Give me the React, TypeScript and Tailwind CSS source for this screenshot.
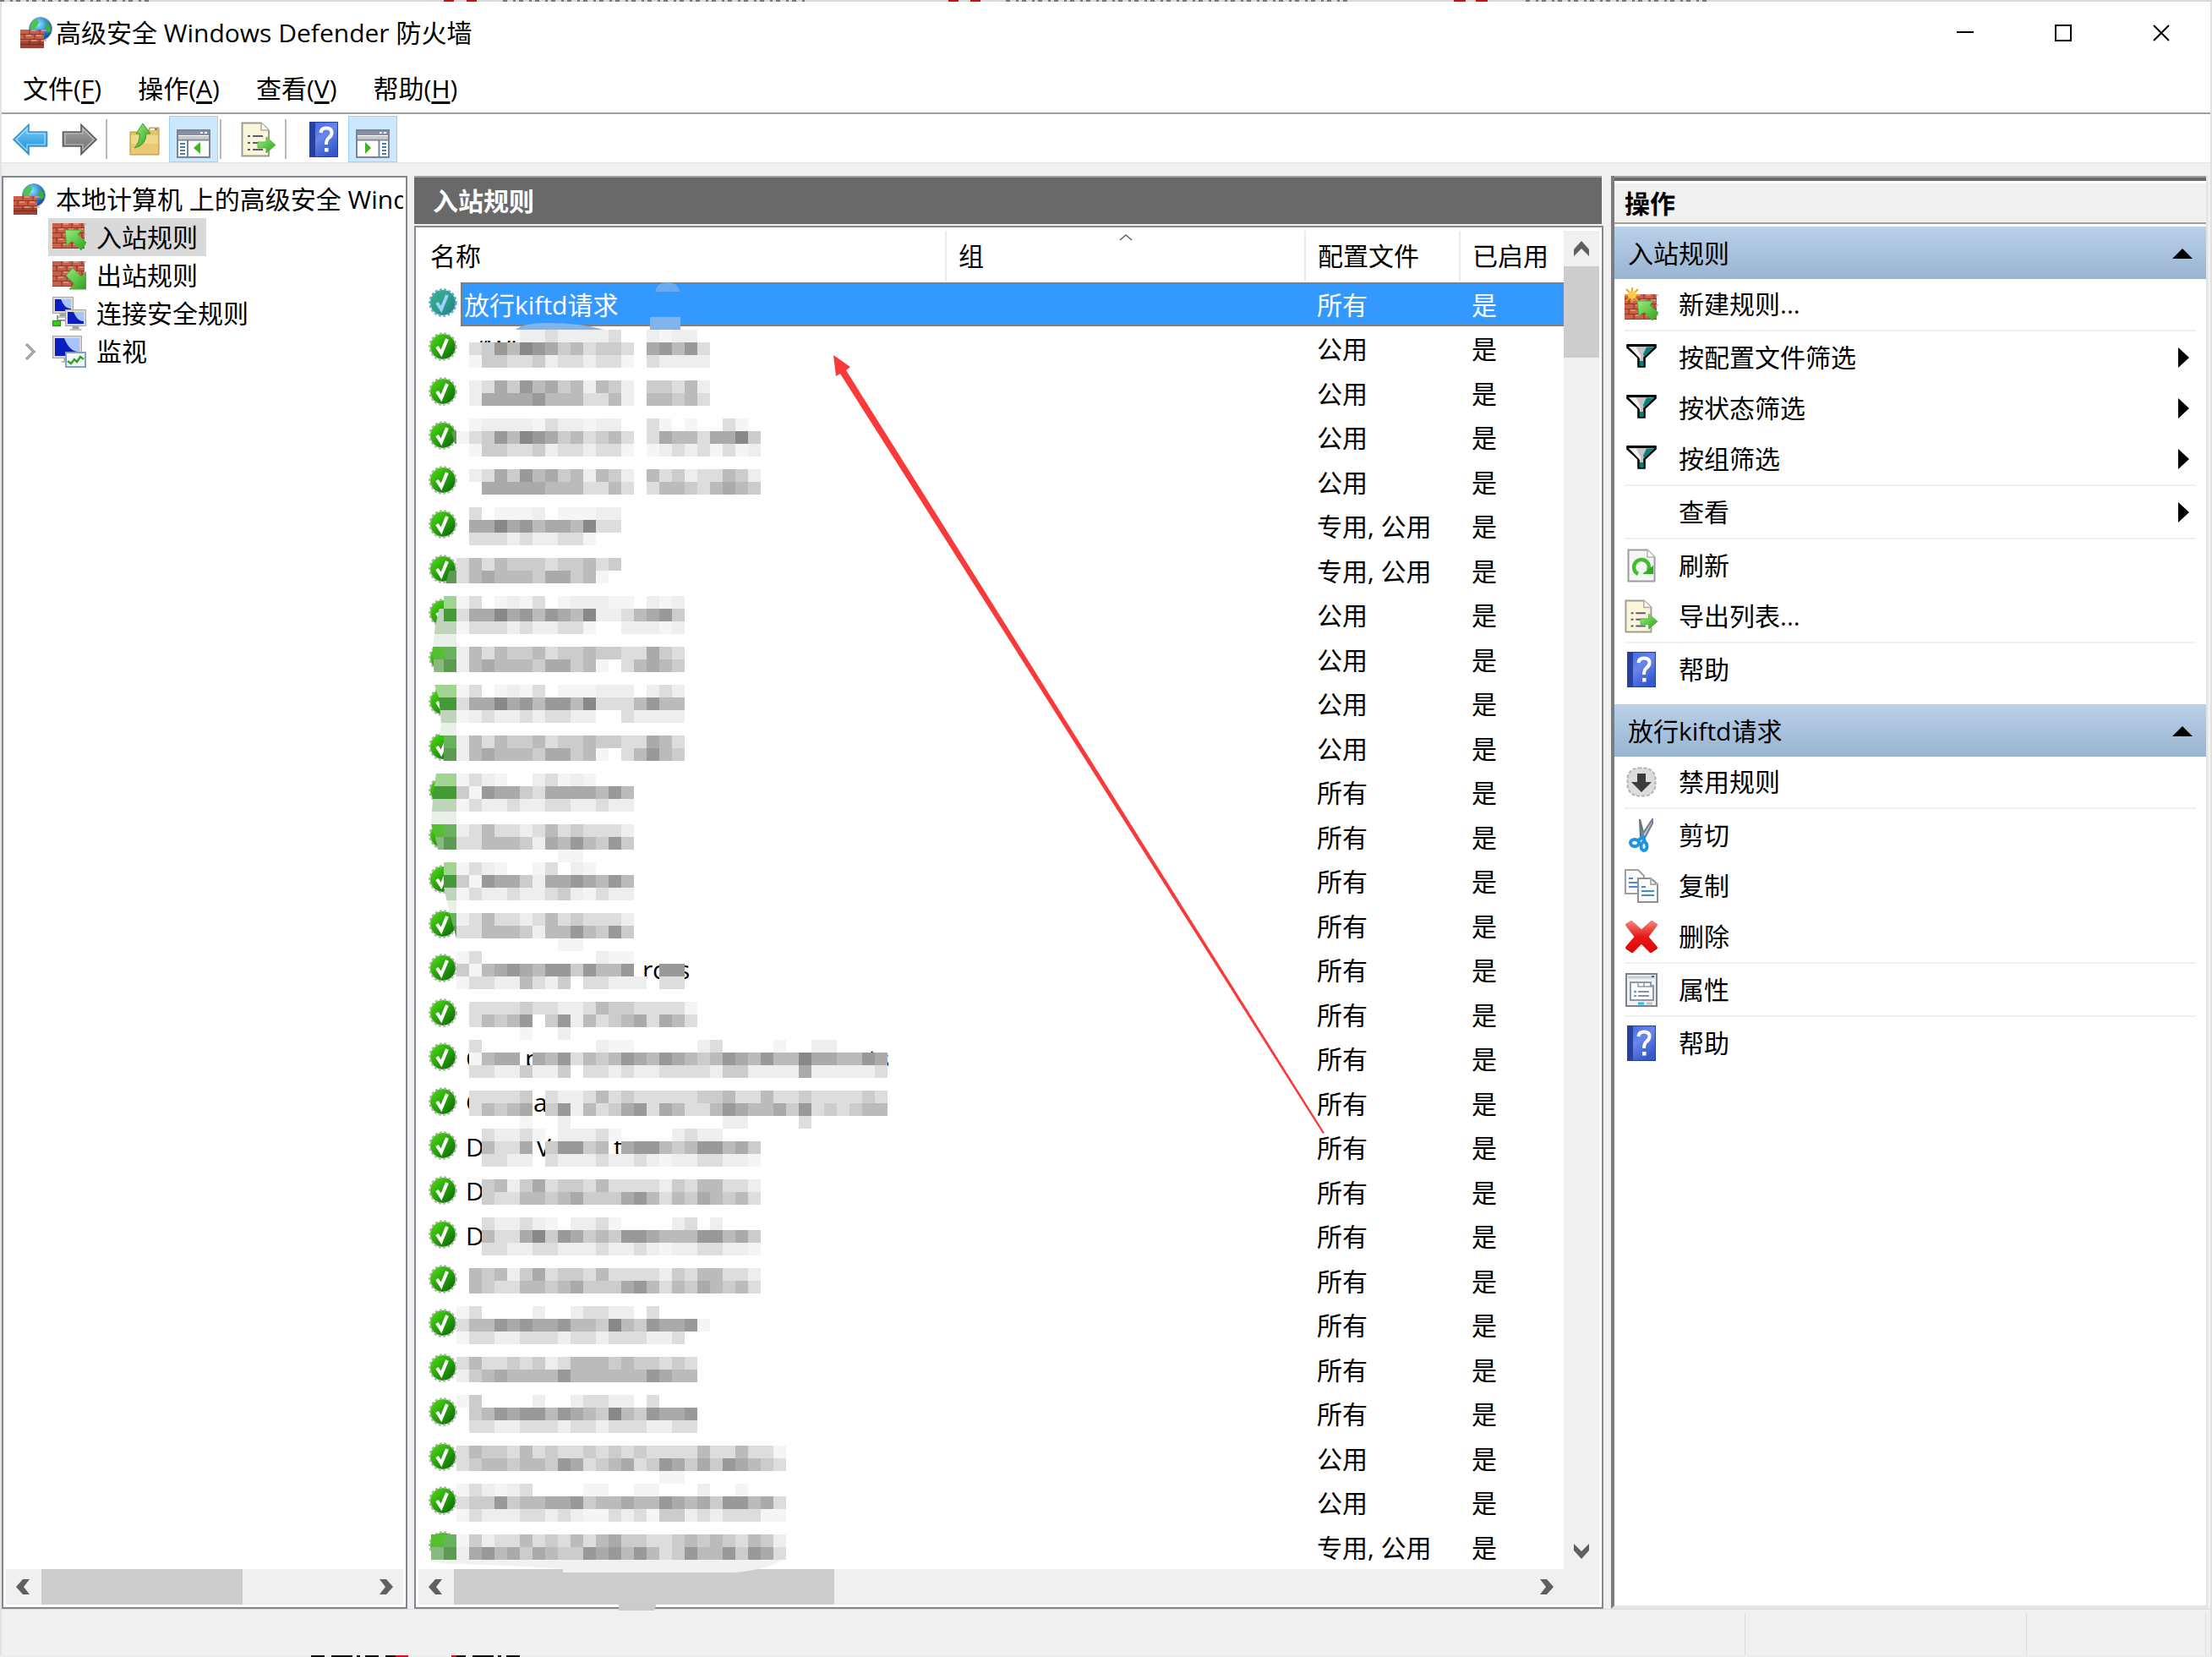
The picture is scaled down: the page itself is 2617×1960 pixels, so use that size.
import { useState } from 'react'
import type { ReactNode } from 'react'

const rules = [
  '所有', '公用', '公用', '公用', '公用', '专用, 公用', '专用, 公用', '公用', '公用', '公用',
  '公用', '所有', '所有', '所有', '所有', '所有', '所有', '所有', '所有', '所有',
  '所有', '所有', '所有', '所有', '所有', '所有', '公用', '公用', '专用, 公用',
]

// one string per 15px strip, first cell sits at x=510; hex digit = grey level, p-w = green tints
const mosaic: [number, string][] = [
  [390, '.......eedeeeed..efee'],
  [405, '...dc9b89acbdccd.a9b9d'],
  [420, '...fccddceddeddf.deeee'],
  [450, '...edac9bacbebce.ccdbe'],
  [465, '...eaaaa9bbbddbe.bbcbd'],
  [495, '...feeeefdeefee..df.f..df'],
  [510, '.sfdc9b89acbdcbd.dabbdaa8c'],
  [525, '...fccddceddeddf.fededfdfe'],
  [555, '...edac9bacbebce.bdceddbce'],
  [570, '....aaaaabbbddbd.dbbcdbabc'],
  [600, '...d.fffe.fffee'],
  [615, '...aa8a9baab8dd'],
  [630, '...dddedeeddf'],
  [660, '..dbdbcccdccbdc'],
  [675, '.sdbabbbcaacbf'],
  [705, '.tfd.fefd.feeeff.efe'],
  [720, 'vudaa8a9b9ab8eedba9c'],
  [735, 'vvfdddedeeddf..eeefe'],
  [750, 'ww'],
  [765, 'pqebdbccbdccbccddacd'],
  [780, 'rsebabbbcaacbf.dbabc'],
  [810, 'ttfd.fefd.fffeee.ede'],
  [825, 'uudaa8a9b99b8dddb9bb'],
  [840, 'vvfedeededdee..deeee'],
  [855, 'ww'],
  [870, '.qebdbccbdccbccddabd'],
  [885, '.sebabbbcaacbf.db9bc'],
  [915, 'ttfdef..edfef'],
  [930, 'uucf9aacdaaaab9b'],
  [945, 'vvfdeedeeddeedee'],
  [960, 'ww'],
  [975, 'pqedbddedbdcddde'],
  [990, 'rsddbbbceab9bc9c'],
  [1005, '..........ff'],
  [1020, '.tfdef..fd.ef'],
  [1035, '.ucf9aaceaa9ab9b'],
  [1050, '.vfdeedeedcefdee'],
  [1065, '.w'],
  [1080, '.qedbddedbdcddde'],
  [1095, '.sddbbbcebb9bc9c'],
  [1110, '..........ff'],
  [1125, '..fd.........eff'],
  [1140, '..cfba9ab99c9bb9..99'],
  [1155, '..fddeebdec.ddeee.dd'],
  [1185, '...ddddcddeedbccddddf'],
  [1200, '...dbcb9.c9ebdcbadabd'],
  [1215, '.......f..e'],
  [1230, '...d.........eff.....ed....f..ee'],
  [1245, '...fbaa.ab9dbcb9ab9abcb9ab9bb8aabb9a'],
  [1260, '...ddeeceec.ddedeeddddecceeeeaeeeeed'],
  [1290, '...ddddc.deedbdcdddddccbddbddcddddcd'],
  [1305, '...dbcba.c9ebdca9dabddb9abbac9dcdcbb'],
  [1320, '.......f..e............ee....d'],
  [1335, '....deedf.eeedf....edee'],
  [1350, '....bdda.c99cb.a99bcb99bac'],
  [1365, '....ddee.deeedeedefeeddeef'],
  [1395, '....cbecadccdbddddecdbbdde'],
  [1410, '....cddbbcbacccA9bdbcabcbd'],
  [1440, '....deedef.eedf....ed.e'],
  [1455, '....bdda8c9acbc99abbb99bac'],
  [1470, '....ddeeddeeedeedefeeddeef'],
  [1500, '...bcbecadccdbddddecdbbdde'],
  [1515, '...bcddbbcbacccA9bdbcabcbd'],
  [1545, '..fd....e..eddee.d'],
  [1560, '..dbb9a9aa9bbc8bc9aa9f'],
  [1575, '..fddeedddeddedddeed'],
  [1605, '..dbddcdcedbbbcbccdcd'],
  [1620, '..ecbabbbb9bbbbbb9abb'],
  [1650, '..fc....e..eddee.d'],
  [1665, '...cb9a99b9abc8bc9aa9'],
  [1680, '...ddeedddeddedddeedd'],
  [1710, '..dbccdbdcddcdcdcddddbddbddf'],
  [1725, '..dcbbcbbc9adcbadc9acac9abcd'],
  [1740, '..................ff'],
  [1755, '..fdefed....ff..ff...e..f'],
  [1770, '..dcc9cbbaa9cbbabb9abac99bad'],
  [1785, '..fdeeeddedeffdedfccededddff'],
  [1815, 'pqfceddbdcdbdbaccddcbcbcdbce'],
  [1830, 'rsea9bacabcc9a9b9bdc9bb9c9ad'],
]

const tints: Record<string, string> = {
  p: '#54c030', q: '#69b25d', r: '#88ba80', s: '#5e9a54',
  t: '#a0d490', u: '#459a38', v: '#c0d4bc', w: '#e9f0e7',
}

// bits of the names that stay readable between the mosaic cells
const fragments: [number, number, string][] = [
  [566, 413, '“Wi'],
  [760, 1147, 'r'],
  [772, 1147, 'c'],
  [802, 1147, 's'],
  [769, 1200, 'C'],
  [551, 1252, 'C'],
  [621, 1252, 'pa'],
  [992, 1252, 'ents'],
  [551, 1304, 'C'],
  [631, 1304, 'a'],
  [551, 1357, 'D'],
  [634, 1357, 'V'],
  [726, 1357, 't'],
  [551, 1409, 'D'],
  [551, 1462, 'D'],
  [818, 1830, 'F'],
]

function Mosaic() {
  return (
    <svg
      className="pointer-events-none absolute left-0 top-0 h-[1640px] w-[1404px]"
      viewBox="492 269 1404 1640"
      fill="none"
    >
      <defs>
        <clipPath id="smear">
          <path d="M2000 300 V1900 H505 V1160 L540 1110 L532 1080 L525 1050 L521 1020 L515 990 L510 975 L512 945 L516 915 L520 870 L522 855 L519 825 L514 810 L512 765 L515 740 L522 710 L530 680 L540 650 V540 L538 525 L534 510 L540 490 V300z" />
        </clipPath>
      </defs>
      <path d="M775 345 q2 -11 15 -11 q12 0 14 11z" fill="#6aaaf0" />
      <rect x="769" y="375" width="36" height="15" fill="#80b4ea" />
      <path d="M610 390 q8 -8 38 -8 q40 0 66 8z" fill="#80b4ea" />
      {fragments.map(([x, y, text]) => (
        <text key={`${x}-${y}`} x={x} y={y + 11} fontSize="30" fill="#000">{text}</text>
      ))}
      <g clipPath="url(#smear)">
        {mosaic.map(([y, cells]) =>
          cells.split('').map((c, i) => {
            if (c === '.') return null
            const fill = tints[c] || (c === 'f' ? '#f5f5f5' : `#${c.repeat(6)}`)
            return <rect key={`${y}-${i}`} x={510 + i * 15} y={y} width="15" height="15" fill={fill} />
          })
        )}
      </g>
      <path d="M508 1845 H925 Q910 1856 870 1860 H666 V1856 Q600 1851 540 1850 Q515 1850 508 1845z" fill="#f1f1f1" />
      <path d="M732 1896 H776 V1900 L774 1905 H732z" fill="#c9cbcd" />
      <path d="M986 420 L1006 434 L1001 438 L1567 1340 L1565 1341 L994 442 L989 445z" fill="#fa3a3a" />
    </svg>
  )
}

function Bricks({ x = 0, y = 0, w = 38, h = 30 }) {
  const rows = Math.floor(h / 6)
  const lines = []
  for (let r = 0; r < rows; r++) {
    lines.push(<path key={`h${r}`} d={`M${x} ${y + r * 6 + 5.5}h${w}`} stroke="#8c3c2c" strokeWidth="1.2" />)
    for (let c = r % 2 ? 5 : 11; c < w; c += 12) {
      lines.push(<path key={`v${r}-${c}`} d={`M${x + c} ${y + r * 6}v5`} stroke="#96402e" strokeWidth="1.4" />)
      lines.push(<path key={`s${r}-${c}`} d={`M${x + c + 2} ${y + r * 6 + 1}h6`} stroke="#e8a08c" strokeWidth="1.4" />)
    }
  }
  return (
    <g>
      <rect x={x} y={y} width={w} height={h} fill="#c8604a" />
      {lines}
    </g>
  )
}

function FirewallIcon() {
  return (
    <svg className="size-[38px] shrink-0" viewBox="0 0 38 38">
      <defs>
        <radialGradient id="globe" cx="0.4" cy="0.3" r="0.8">
          <stop offset="0" stopColor="#8fe4ff" />
          <stop offset="0.5" stopColor="#2f86dc" />
          <stop offset="1" stopColor="#10367e" />
        </radialGradient>
      </defs>
      <circle cx="24" cy="14" r="13.5" fill="url(#globe)" stroke="#7a9ab0" />
      <path d="M12 13 Q12 4 20 3 Q24 6 20 10 Q18 15 12 15z" fill="#48c848" />
      <path d="M29 5 Q36 9 36 16 Q34 20 31 18 Q28 12 31 10z" fill="#3fae3c" />
      <Bricks x={0} y={15} w={28} h={22} />
      <path d="M0 29h28v8H0z" fill="#5c1008" opacity="0.35" />
    </svg>
  )
}

function GreenDefs({ id }: { id: string }) {
  return (
    <defs>
      <linearGradient id={id} x1="0" y1="0" x2="1" y2="1">
        <stop offset="0" stopColor="#9af07c" />
        <stop offset="1" stopColor="#2f9c1e" />
      </linearGradient>
    </defs>
  )
}

function InboundIcon() {
  return (
    <svg className="h-[34px] w-10 shrink-0" viewBox="0 0 40 34">
      <GreenDefs id="gin" />
      <Bricks />
      <path d="M15 8 H35 L30 13 L40 23 L34 32 L23 21 L17 27 z" fill="url(#gin)" stroke="#4aa838" strokeWidth="1" />
    </svg>
  )
}

function OutboundIcon() {
  return (
    <svg className="h-[34px] w-10 shrink-0" viewBox="0 0 40 34">
      <GreenDefs id="gout" />
      <Bricks />
      <path d="M24 8 L34 18 L40 13 V33 H20 L26 27 L16 17 z" fill="url(#gout)" stroke="#4aa838" strokeWidth="1" />
    </svg>
  )
}

function Monitor({ x, y, w, h }: { x: number; y: number; w: number; h: number }) {
  return (
    <g>
      <rect x={x + w / 2 - 4} y={y + h} width="8" height="3" fill="#a4a4a0" />
      <rect x={x + w / 2 - 7} y={y + h + 3} width="14" height="2" fill="#c2c2be" />
      <rect x={x + 0.5} y={y + 0.5} width={w - 1} height={h - 1} fill="#dad8d0" stroke="#a8a8a4" />
      <rect x={x + 3} y={y + 3} width={w - 6} height={h - 6} fill="#0a1ec0" />
      <path d={`M${x + w * 0.4} ${y + 3} H${x + w - 3} V${y + h * 0.7} Q${x + w * 0.6} ${y + h * 0.75} ${x + w * 0.4} ${y + 3}z`} fill="#a8c4ff" />
    </g>
  )
}

function ConnectionIcon() {
  return (
    <svg className="size-10 shrink-0" viewBox="0 0 40 40">
      <Monitor x={0} y={0} w={25} h={20} />
      <path d="M6 22 V28 H18" stroke="#999" strokeWidth="2" fill="none" />
      <rect x="0.5" y="28.5" width="9" height="6" fill="#2fcf10" stroke="#2a8a18" />
      <Monitor x={15} y={15} w={25} h={20} />
    </svg>
  )
}

function MonitoringIcon() {
  return (
    <svg className="size-10 shrink-0" viewBox="0 0 40 40">
      <Monitor x={0} y={1} w={35} h={27} />
      <rect x="16" y="21" width="23" height="17" fill="#f4f8ff" stroke="#7fa2cc" strokeWidth="2" />
      <path d="M18 31 L22 34 L26 29 L29 32 L33 26 L37 29" stroke="#38a020" strokeWidth="2.4" fill="none" />
    </svg>
  )
}

function CheckIcon({ selected = false }) {
  const id = selected ? 'chk-sel' : 'chk'
  return (
    <svg className="mb-1 size-[34px] shrink-0" viewBox="0 0 34 34">
      <defs>
        <linearGradient id={id} x1="0" y1="0" x2="1" y2="1">
          <stop offset="0.15" stopColor={selected ? '#3aae8c' : '#44d010'} />
          <stop offset="0.9" stopColor={selected ? '#238888' : '#0c6e06'} />
        </linearGradient>
      </defs>
      <circle cx="17" cy="17" r="15" fill={`url(#${id})`} />
      <circle cx="17" cy="17" r="15.6" fill="none" stroke={selected ? '#6aa6dc' : '#a8b4a4'} strokeWidth="2.4" strokeDasharray="3 2.3" />
      <path d="M10 17 L15 25 L22 8" fill="none" stroke={selected ? '#9ad0fa' : '#fff'} strokeWidth="4" />
    </svg>
  )
}

function BackIcon({ forward = false }) {
  const id = forward ? 'fwd' : 'back'
  return (
    <svg className="h-[38px] w-[42px]" viewBox="0 0 42 38">
      <defs>
        <linearGradient id={id} x1="0" y1="0" x2="0" y2="1">
          <stop offset="0" stopColor={forward ? '#a4a4a4' : '#7cd2fa'} />
          <stop offset="1" stopColor={forward ? '#6e6e6e' : '#1488d8'} />
        </linearGradient>
      </defs>
      <path
        d={forward ? 'M41 19 L23 1.5 V10 H1.5 V27 H23 V36.5z' : 'M1 19 L19 1.5 V10 H40.5 V27 H19 V36.5z'}
        fill={`url(#${id})`}
        stroke={forward ? '#5a5a5a' : '#3f8fc4'}
        strokeWidth="1.6"
      />
      <path
        d={forward ? 'M38 19 L25 6 V12 H4 V25 H25 V32z' : 'M4 19 L17 6 V12 H38 V25 H17 V32z'}
        fill="none"
        stroke={forward ? '#c0c0c0' : '#a4e0ff'}
        strokeWidth="1.2"
      />
    </svg>
  )
}

function FolderIcon() {
  return (
    <svg className="h-[38px] w-9" viewBox="0 0 36 38">
      <GreenDefs id="gfold" />
      <path d="M1 10 H22 L24 5 H35 V37 H1z" fill="#e8c468" stroke="#b8903c" />
      <path d="M25 7 h5" stroke="#fff" strokeWidth="2" />
      <path d="M30 7 h3" stroke="#3f90d8" strokeWidth="2" />
      <path d="M2 14 H34 V36 H2z" fill="#f3d88c" />
      <path d="M2 24 H34 V36 H2z" fill="#e6c060" opacity="0.6" />
      <path d="M16 0 L25 12 H20 Q20 26 6 29 Q13 22 12 12 H8z" fill="url(#gfold)" stroke="#3f9c2a" />
    </svg>
  )
}

function PaneIcon({ flip = false }) {
  return (
    <svg className="h-[34px] w-10" viewBox="0 0 40 34">
      <rect x="1" y="1" width="38" height="32" fill="#fff" stroke="#7b8494" strokeWidth="2" />
      <rect x="2" y="2" width="36" height="5" fill="#8891a1" />
      <path d="M28 4h3M33 4h3" stroke="#e8f0fa" strokeWidth="2" />
      <rect x="2" y="8" width="36" height="3" fill="#c4cad4" />
      <path d="M1 12.5H39" stroke="#7b8494" strokeWidth="2" />
      <path d={flip ? 'M27.5 13V33' : 'M13 13V33'} stroke="#7b8494" strokeWidth="2" />
      <path d={flip ? 'M31 17h5M31 21h5M31 25h5M31 29h5' : 'M4 17h6M4 21h6M4 25h6M4 29h6'} stroke="#3c80c0" strokeWidth="1.8" />
      <path d={flip ? 'M11 15 L18 22 L11 29z' : 'M28 15 L20 22 L28 29z'} fill="#44b024" />
    </svg>
  )
}

function ExportIcon() {
  return (
    <svg className="h-[42px] w-[42px]" viewBox="0 0 42 42">
      <GreenDefs id="gexp" />
      <path d="M1.5 1.5 H24 L33 10 V40.5 H1.5z" fill="#fbf5da" stroke="#a09c90" strokeWidth="2" />
      <path d="M24 1.5 V10 H33" fill="#fff" stroke="#b0aca0" strokeWidth="1.6" />
      <path d="M8 17h3M8 25h3M8 33h3M14 17h12M14 25h10M14 33h12" stroke="#5a5a70" strokeWidth="2" />
      <path d="M20 24 H30 V18 L41 27.5 L30 37 V31 H20z" fill="url(#gexp)" stroke="#58b848" />
    </svg>
  )
}

function HelpIcon() {
  return (
    <svg className="h-[42px] w-[34px]" viewBox="0 0 34 42">
      <defs>
        <linearGradient id="book" x1="0" y1="0" x2="0.6" y2="1">
          <stop offset="0" stopColor="#3f66e0" />
          <stop offset="0.5" stopColor="#6a86ea" />
          <stop offset="1" stopColor="#3558cc" />
        </linearGradient>
      </defs>
      <rect x="0.5" y="0.5" width="33" height="41" fill="url(#book)" stroke="#24409c" />
      <rect x="1" y="1" width="6" height="40" fill="#2840a0" />
      <path d="M13.5 13 Q14 7.500 20 7.500 Q26.500 7.500 26.500 13 Q26.500 16.500 23 19 Q20 21.500 20 27" fill="none" stroke="#fff" strokeWidth="4" />
      <rect x="18" y="31" width="4.500" height="4.500" fill="#fff" />
    </svg>
  )
}

function NewRuleIcon() {
  return (
    <svg className="size-10" viewBox="0 0 40 40">
      <GreenDefs id="gnew" />
      <Bricks y={8} />
      <path d="M15 16 H34 L30 21 L40 30 L33 39 L23 29 L17 34 z" fill="url(#gnew)" stroke="#4aa838" />
      <path d="M9 0V18M0 9H18M2 2L16 16M16 2L2 16" stroke="#f0a020" strokeWidth="1.8" />
      <circle cx="9" cy="9" r="5" fill="#ffc848" />
    </svg>
  )
}

function FilterIcon() {
  return (
    <svg className="mb-1 h-7 w-9" viewBox="0 0 36 28">
      <path d="M1.5 1.5 H34.5 V4 L21.5 16 V26.5 H14.5 V16 L1.5 4z" fill="#c4c4c4" stroke="#000" strokeWidth="2.6" />
      <path d="M4 3.5 H12 L17 14 V18 L4 4z" fill="#f2f2f2" />
      <path d="M24 3.5 H33 L21 15 L20 12z" fill="#008080" />
      <rect x="16" y="20" width="4.5" height="6" fill="#008080" />
      <path d="M1 1.5 H35" stroke="#000" strokeWidth="2.8" />
    </svg>
  )
}

function RefreshIcon() {
  return (
    <svg className="h-10 w-[34px]" viewBox="0 0 34 40">
      <path d="M1.5 1.5 H24 L32.5 10 V38.5 H1.5z" fill="#f4f6f6" stroke="#9c9c9c" strokeWidth="2" />
      <path d="M24 1.5 V10 H32.5" fill="#fff" stroke="#b4b4b4" strokeWidth="1.5" />
      <path d="M13 30 A9 9 0 1 1 25 26" fill="none" stroke="#44bc34" strokeWidth="4.5" />
      <path d="M18 30 H31 V20z" fill="#2cb01c" />
    </svg>
  )
}

function DisableIcon() {
  return (
    <svg className="size-9" viewBox="0 0 36 36">
      <rect x="1.5" y="1.5" width="33" height="33" rx="13" fill="#dcdcdc" stroke="#b4b4b4" strokeWidth="2" strokeDasharray="4 2" />
      <path d="M13 8 H23 V18 H30 L18 30 L6 18 H13z" fill="#3c3c3c" />
    </svg>
  )
}

function CutIcon() {
  return (
    <svg className="h-10 w-8" viewBox="0 0 32 40">
      <path d="M14 1 L15 24 L20 24z" fill="#8494a4" stroke="#607080" strokeWidth="2" />
      <path d="M29 1 L15 22 L19 25 L29 6z" fill="#b4c0cc" stroke="#708090" strokeWidth="2" />
      <ellipse cx="8" cy="29" rx="5" ry="4" fill="none" stroke="#2094e0" strokeWidth="4" />
      <ellipse cx="19" cy="33" rx="3.5" ry="5" fill="none" stroke="#2094e0" strokeWidth="4" />
      <path d="M12 26 L18 22 L20 28" stroke="#2094e0" strokeWidth="4" fill="none" />
    </svg>
  )
}

function CopyIcon() {
  return (
    <svg className="size-10" viewBox="0 0 40 40">
      <path d="M1 1 H16 L23 8 V29 H1z" fill="#fbfbfb" stroke="#a0a0a0" strokeWidth="2" />
      <path d="M5 11h5M5 16h10M5 21h10" stroke="#4a88c8" strokeWidth="2" />
      <path d="M16 11 H31 L39 18 V39 H16z" fill="#fbfbfb" stroke="#909090" strokeWidth="2" />
      <path d="M31 11 V18 H39" fill="none" stroke="#b0b0b0" strokeWidth="2" />
      <path d="M20 21h5M20 26h15M20 31h15" stroke="#4a88c8" strokeWidth="2" />
    </svg>
  )
}

function DeleteIcon() {
  return (
    <svg className="size-10" viewBox="0 0 40 40">
      <defs>
        <linearGradient id="del" x1="0" y1="0" x2="0" y2="1">
          <stop offset="0" stopColor="#f47c74" />
          <stop offset="0.5" stopColor="#e81818" />
          <stop offset="1" stopColor="#e00808" />
        </linearGradient>
      </defs>
      <path
        d="M3 6 L8 3 L20 14 L32 3 L37 6 L26 20 L37 33 L31 37 L20 26 L9 37 L3 33 L14 20z"
        fill="url(#del)"
        stroke="url(#del)"
        strokeWidth="4"
        strokeLinejoin="round"
      />
    </svg>
  )
}

function PropertiesIcon() {
  return (
    <svg className="h-10 w-[38px]" viewBox="0 0 38 40">
      <rect x="1" y="1" width="36" height="38" fill="#eef1f4" stroke="#7c8288" strokeWidth="2" />
      <path d="M3 5H35" stroke="#c4ccd4" strokeWidth="3" />
      <path d="M31 4h3" stroke="#3a6a9a" strokeWidth="2" />
      <path d="M6 11 H30 V15 H33 V32 H6z" fill="#fff" stroke="#9098a8" strokeWidth="2" />
      <path d="M15 11V16H32M22 11V16" stroke="#9098a8" strokeWidth="1.5" fill="none" />
      <path d="M10 22h3" stroke="#20c0f0" strokeWidth="2.5" />
      <path d="M15 22h13M10 27h3M15 27h13" stroke="#8890a0" strokeWidth="2" />
      <path d="M15 36h7" stroke="#20c0f0" strokeWidth="3" />
      <path d="M25 36h7" stroke="#c0c4c8" strokeWidth="3" />
    </svg>
  )
}

function ScrollButton({ dir }: { dir: 'left' | 'right' | 'up' | 'down' }) {
  const paths = {
    left: 'M12 21 L20 12 H28 L21 21 L28 30 H20z',
    right: 'M30 21 L22 12 H14 L21 21 L14 30 H22z',
    up: 'M21 12 L30 22 V30 L21 21 L12 30 V22z',
    down: 'M21 30 L30 20 V12 L21 21 L12 12 V20z',
  }
  return (
    <button aria-label={dir} className="size-[42px] shrink-0">
      <svg className="size-[42px]" viewBox="0 0 42 42">
        <path d={paths[dir]} fill="#606060" />
      </svg>
    </button>
  )
}

function ToolButton({ label, active, children }: { label: string; active?: boolean; children: ReactNode }) {
  return (
    <button
      aria-label={label}
      className={`flex w-[58px] items-center justify-center border ${active ? 'border-[#99d1ff] bg-[#cce8ff] pt-[10px]' : 'border-transparent'}`}
    >
      {children}
    </button>
  )
}

function ToolSeparator() {
  return <div className="my-1 ml-[2px] mr-[15px] w-[2px] bg-[#b8b8b8]" />
}

function TreeItem({ icon, label, selected, expandable }: { icon: ReactNode; label: string; selected?: boolean; expandable?: boolean }) {
  return (
    <li className="flex h-[45px] items-center">
      <div className="w-[53px] shrink-0 pl-6">
        {expandable && (
          <svg className="h-5 w-4" viewBox="0 0 16 20">
            <path d="M3 1 L12 10 L3 19" fill="none" stroke="#a6a6a6" strokeWidth="3.5" />
          </svg>
        )}
      </div>
      <button className={`flex h-full items-center gap-3 whitespace-nowrap pl-[5px] pr-[10px] ${selected ? 'bg-[#d9d9d9]' : ''}`}>
        {icon}
        {label}
      </button>
    </li>
  )
}

function SectionBar({ label }: { label: string }) {
  return (
    <button className="flex h-[62px] w-full shrink-0 items-center justify-between bg-linear-to-b from-[#b9d1ea] to-[#99b4d1] px-4 pt-[2px]">
      {label}
      <svg className="h-3 w-6" viewBox="0 0 24 12">
        <path d="M12 0 L24 12 H0z" fill="#000" />
      </svg>
    </button>
  )
}

function Action({ icon, label, submenu }: { icon?: ReactNode; label: string; submenu?: boolean }) {
  return (
    <button className="flex h-[60px] w-full items-center pl-3 pr-5 text-left">
      <span className="flex w-10 shrink-0 justify-center">{icon}</span>
      <span className="ml-6 flex-1">{label}</span>
      {submenu && (
        <svg className="h-6 w-[13px]" viewBox="0 0 13 24">
          <path d="M0 0 L13 12 L0 24z" fill="#000" />
        </svg>
      )}
    </button>
  )
}

function ActionSeparator() {
  return <div className="mx-3 mb-px h-[2px] bg-[#f0f0f0]" />
}

export default function App() {
  const [selected, setSelected] = useState(0)

  return (
    <div className="flex min-h-screen flex-col bg-[#e2e2e2] font-['Open_Sans','Noto_Sans_CJK_SC',sans-serif] text-[30px] leading-10 text-black">
      <div className="h-[2px] bg-[#dadada]">
        <svg className="h-[2px] w-full">
          <path d="M525 1h12M552 1h12M1122 1h12M1148 1h12M1720 1h14M1746 1h14" stroke="#cc1010" strokeWidth="2" />
          <path d="M0 1h180M595 1h360M1190 1h410M1805 1h215" stroke="#777" strokeWidth="2" strokeDasharray="5 7 3 4" />
        </svg>
      </div>

      <div className="mx-[2px] flex flex-1 flex-col bg-white">
        <header className="flex h-[74px] items-center pl-[22px]">
          <FirewallIcon />
          <h1 className="ml-1 flex-1">高级安全 Windows Defender 防火墙</h1>
          <button aria-label="最小化" className="flex w-[116px] justify-center">
            <svg className="size-5" viewBox="0 0 20 20"><path d="M0 9H20" stroke="#000" strokeWidth="2" /></svg>
          </button>
          <button aria-label="最大化" className="flex w-[116px] justify-center">
            <svg className="size-5" viewBox="0 0 20 20"><rect x="1" y="1" width="18" height="18" fill="none" stroke="#000" strokeWidth="2" /></svg>
          </button>
          <button aria-label="关闭" className="flex w-[116px] justify-center">
            <svg className="size-5" viewBox="0 0 20 20"><path d="M1 1L19 19M19 1L1 19" stroke="#000" strokeWidth="2" /></svg>
          </button>
        </header>

        <nav className="flex h-[59px] items-center gap-[43px] border-b-2 border-[#a0a0a0] pl-[25px]">
          <button>文件(<u className="underline-offset-4">F</u>)</button>
          <button>操作(<u className="underline-offset-4">A</u>)</button>
          <button>查看(<u className="underline-offset-4">V</u>)</button>
          <button>帮助(<u className="underline-offset-4">H</u>)</button>
        </nav>

        <div className="flex h-[58px] border-b border-[#e3e3e3] pl-[5px] pt-[2px]">
          <ToolButton label="后退"><BackIcon /></ToolButton>
          <ToolButton label="前进"><BackIcon forward /></ToolButton>
          <ToolSeparator />
          <ToolButton label="上一级"><FolderIcon /></ToolButton>
          <ToolButton label="显示/隐藏控制台树" active><PaneIcon /></ToolButton>
          <ToolSeparator />
          <ToolButton label="导出列表"><ExportIcon /></ToolButton>
          <ToolSeparator />
          <ToolButton label="帮助"><HelpIcon /></ToolButton>
          <ToolButton label="显示/隐藏操作窗格" active><PaneIcon flip /></ToolButton>
        </div>

        <main className="grid flex-1 grid-cols-[480px_minmax(0,1fr)_706px] gap-x-2 bg-[#f0f0f0] pr-[3px] pt-[15px]">
          <aside className="flex flex-col overflow-hidden border-2 border-[#828790] bg-white p-[3px]">
            <div className="flex-1 overflow-hidden">
              <button className="flex h-[45px] items-center gap-3 whitespace-nowrap pl-[9px]">
                <FirewallIcon />
                本地计算机 上的高级安全 Windows Defender 防火墙
              </button>
              <ul className="-ml-[3px]">
                <TreeItem icon={<InboundIcon />} label="入站规则" selected />
                <TreeItem icon={<OutboundIcon />} label="出站规则" />
                <TreeItem icon={<ConnectionIcon />} label="连接安全规则" />
                <TreeItem icon={<MonitoringIcon />} label="监视" expandable />
              </ul>
            </div>
            <div className="flex bg-[#f0f0f0]">
              <ScrollButton dir="left" />
              <div className="w-[238px] bg-[#cdcdcd]" />
              <div className="flex-1" />
              <ScrollButton dir="right" />
            </div>
          </aside>

          <section className="mr-px flex flex-col">
            <h2 className="mb-[2px] mr-[2px] flex h-[57px] items-center border-t-2 border-[#a0a0a0] bg-[#696969] pl-[22px] font-bold text-white">入站规则</h2>
            <div className="relative flex-1 border-2 border-[#828790] bg-white px-[3px] pb-[3px] pt-1">
              <div className="flex">
                <table className="flex-1 table-fixed border-collapse text-left">
                  <colgroup>
                    <col className="w-[624px]" />
                    <col className="w-[425px]" />
                    <col className="w-[183px]" />
                    <col />
                  </colgroup>
                  <thead>
                    <tr className="h-[60px]">
                      <th className="border-r-2 border-[#ebebeb] p-0 pl-[14px] font-normal">名称</th>
                      <th className="relative border-r-2 border-[#ebebeb] p-0 pl-[14px] font-normal">
                        组
                        <svg className="absolute left-1/2 top-1 -ml-2 h-2 w-4" viewBox="0 0 16 8">
                          <path d="M1 7 L8 1 L15 7" fill="none" stroke="#606060" strokeWidth="1.5" />
                        </svg>
                      </th>
                      <th className="border-r-2 border-[#ebebeb] p-0 pl-[14px] font-normal">配置文件</th>
                      <th className="p-0 pl-[14px] font-normal">已启用</th>
                    </tr>
                  </thead>
                  <tbody>
                    {rules.map((profile, i) => {
                      const on = i === selected
                      const cell = on ? 'border-y-2 border-[#808080] bg-[#3399ff] text-white' : ''
                      return (
                        <tr key={i} onClick={() => setSelected(i)} className="h-[53px] even:h-[52px]">
                          <td className="p-0">
                            <div className="flex items-center gap-1 pl-3">
                              <CheckIcon selected={on} />
                              <div className={`flex h-[52px] flex-1 items-center pl-[2px] pt-[2px] ${on ? 'border-y-2 border-l-2 border-[#808080] bg-[#3399ff] text-white' : ''}`}>
                                {i === 0 && '放行kiftd请求'}
                              </div>
                            </div>
                          </td>
                          <td className="p-0"><div className={`h-[52px] ${cell}`} /></td>
                          <td className="p-0"><div className={`flex h-[52px] items-center pl-[14px] pt-[2px] ${cell}`}>{profile}</div></td>
                          <td className="p-0"><div className={`flex h-[52px] items-center pl-[14px] pt-[2px] ${cell}`}>是</div></td>
                        </tr>
                      )
                    })}
                  </tbody>
                </table>
                <div className="flex w-[42px] flex-col bg-[#f0f0f0]">
                  <ScrollButton dir="up" />
                  <div className="h-[108px] bg-[#cdcdcd]" />
                  <div className="flex-1" />
                  <ScrollButton dir="down" />
                </div>
              </div>
              <div className="flex bg-[#f0f0f0] pr-[42px]">
                <ScrollButton dir="left" />
                <div className="w-[450px] bg-[#cdcdcd]" />
                <div className="flex-1" />
                <ScrollButton dir="right" />
              </div>
              <Mosaic />
            </div>
          </section>

          <aside className="flex flex-col border-b-4 border-l-4 border-r-2 border-b-[#e3e3e3] border-l-[#7c7c7c] border-r-[#e3e3e3] bg-white">
            <div className="h-[6px] border-t-2 border-[#a0a0a0] bg-[#696969]" />
            <h2 className="mb-[3px] mt-[3px] flex h-[48px] items-center border-b-2 border-[#a0a0a0] bg-[#f0f0f0] pl-3 pt-[2px] font-bold">操作</h2>
            <SectionBar label="入站规则" />
            <div className="pb-[11px]">
              <Action icon={<NewRuleIcon />} label="新建规则..." />
              <ActionSeparator />
              <Action icon={<FilterIcon />} label="按配置文件筛选" submenu />
              <Action icon={<FilterIcon />} label="按状态筛选" submenu />
              <Action icon={<FilterIcon />} label="按组筛选" submenu />
              <ActionSeparator />
              <Action label="查看" submenu />
              <ActionSeparator />
              <Action icon={<RefreshIcon />} label="刷新" />
              <Action icon={<ExportIcon />} label="导出列表..." />
              <ActionSeparator />
              <Action icon={<HelpIcon />} label="帮助" />
            </div>
            <SectionBar label="放行kiftd请求" />
            <Action icon={<DisableIcon />} label="禁用规则" />
            <ActionSeparator />
            <Action icon={<CutIcon />} label="剪切" />
            <Action icon={<CopyIcon />} label="复制" />
            <Action icon={<DeleteIcon />} label="删除" />
            <ActionSeparator />
            <Action icon={<PropertiesIcon />} label="属性" />
            <ActionSeparator />
            <Action icon={<HelpIcon />} label="帮助" />
          </aside>
        </main>

        <footer className="flex h-[55px] justify-end border-t border-[#dcdcdc] bg-[#f0f0f0] pr-[5px] pt-1">
          <div className="w-[333px] border-l border-[#dcdcdc]" />
          <div className="w-[213px] border-x border-[#dcdcdc]" />
        </footer>
      </div>

      <div className="h-[2px] bg-[#ececec]">
        <svg className="h-[2px] w-full">
          <path d="M368 1h100M535 1h85" stroke="#111" strokeWidth="2" strokeDasharray="16 8 25 5 4 6" />
          <path d="M468 1h15M534 1h6" stroke="#d01020" strokeWidth="2" />
        </svg>
      </div>
    </div>
  )
}
